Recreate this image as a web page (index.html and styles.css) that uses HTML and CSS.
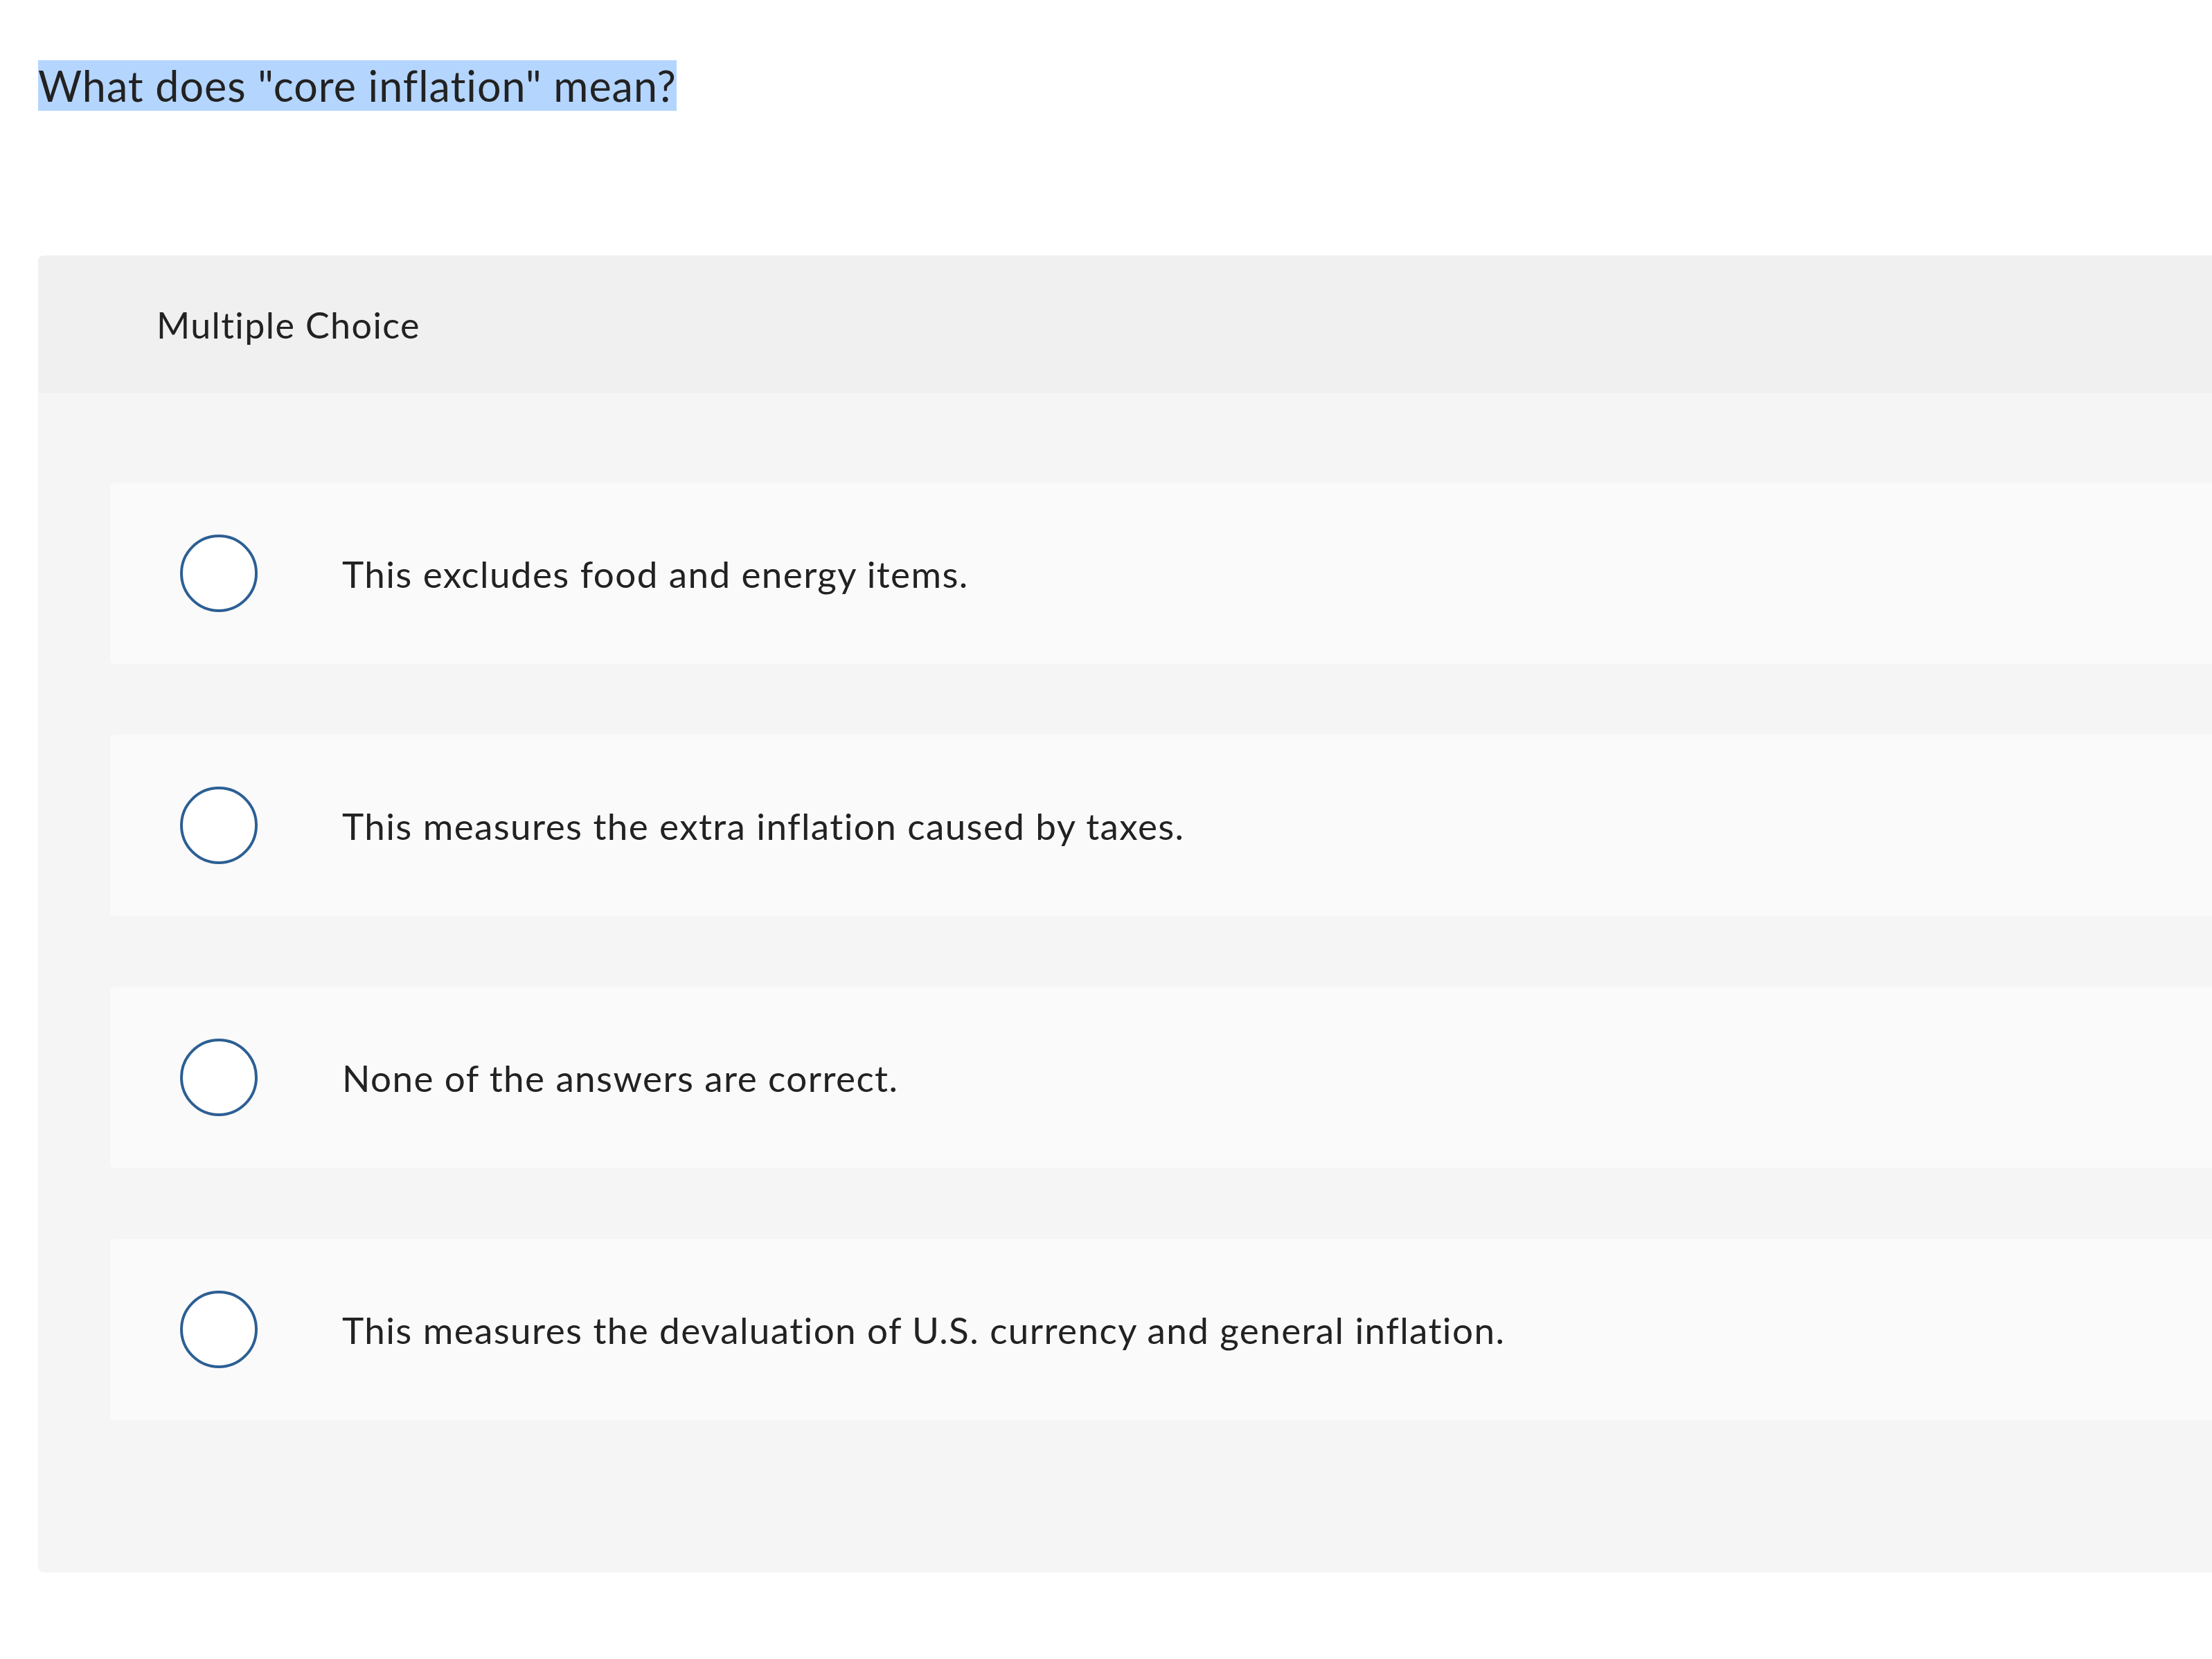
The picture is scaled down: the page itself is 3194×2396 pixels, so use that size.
FILE: index.html
```html
<!DOCTYPE html>
<html lang="en">
<head>
  <meta charset="UTF-8">
  <meta name="viewport" content="width=device-width, initial-scale=1">
  <title>Multiple Choice Question</title>
  <link rel="stylesheet" href="styles.css">
</head>
<body>
  <!-- Question prompt (text appears selected in the screenshot) -->
  <p class="prompt"><span class="selected">What does "core inflation" mean?</span></p>

  <!-- Answer panel -->
  <div class="panel">
    <div class="panel-header">Multiple Choice</div>
    <div class="panel-body">
      <label class="choice">
        <input type="radio" name="answer" value="a">
        <span class="choice-text">This excludes food and energy items.</span>
      </label>
      <label class="choice">
        <input type="radio" name="answer" value="b">
        <span class="choice-text">This measures the extra inflation caused by taxes.</span>
      </label>
      <label class="choice">
        <input type="radio" name="answer" value="c">
        <span class="choice-text">None of the answers are correct.</span>
      </label>
      <label class="choice">
        <input type="radio" name="answer" value="d">
        <span class="choice-text">This measures the devaluation of U.S. currency and general inflation.</span>
      </label>
    </div>
  </div>
</body>
</html>
```

FILE: styles.css
```css
/* Base page */
body {
  margin: 0;
  background: #fff;
  color: #222;
  font-family: Lato, "Open Sans", Arial, sans-serif;
  font-variant-ligatures: none;
  overflow-x: hidden;
}
/* Question prompt */
.prompt {
  margin: 0;
  padding: 89px 0 0 55px;
  font-size: 61px;
  line-height: 70px;
  letter-spacing: 1px;
}
.selected {
  background: #b4d5fe;
}
/* Panel holding the choices; runs off the right edge */
.panel {
  margin: 210px -40px 0 55px;
  background: #f5f5f5;
  border-radius: 8px;
  overflow: hidden;
}
.panel-header {
  height: 199px;
  display: flex;
  align-items: center;
  padding-left: 171px;
  background: #f0f0f0;
  font-size: 52px;
  letter-spacing: 1.4px;
}
.panel-body {
  display: flex;
  flex-direction: column;
  gap: 102px;
  padding: 129px 0 220px 104px;
}
/* One answer row */
.choice {
  display: flex;
  align-items: center;
  gap: 122px;
  height: 262px;
  padding-left: 101px;
  background: #fafafa;
  border-radius: 6px 0 0 6px;
  font-size: 53px;
  letter-spacing: 1.4px;
  cursor: pointer;
}
.choice input {
  appearance: none;
  -webkit-appearance: none;
  margin: 0;
  flex: none;
  width: 112px;
  height: 112px;
  border: 4px solid #2c5f94;
  border-radius: 50%;
  background: #fff;
}
```
